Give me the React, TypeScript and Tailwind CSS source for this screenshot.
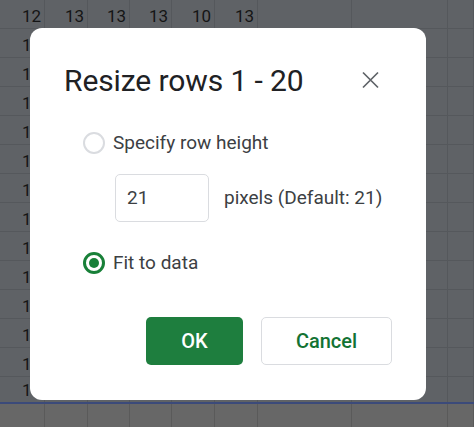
import React from 'react';

const COLS = [45, 43, 42, 42, 43, 43, 94, 96, 26];
const TOP_ROW = ['12', '13', '13', '13', '10', '13', '', '', ''];

function SheetRow({ values, h }: { values: string[]; h: string }) {
  return (
    <div className={`flex ${h} border-b border-[#55585c]`}>
      {COLS.map((w, i) => (
        <div
          key={i}
          style={{ width: w }}
          className="flex shrink-0 items-end justify-end border-r border-[#55585c] pb-[3px] pr-[3px] text-[17px] leading-none text-[#151515]"
        >
          {values[i]}
        </div>
      ))}
    </div>
  );
}

function Radio({ checked }: { checked: boolean }) {
  return checked ? (
    <span className="grid h-[22px] w-[22px] place-items-center rounded-full border-[3px] border-[#188038]">
      <span className="h-[10px] w-[10px] rounded-full bg-[#188038]" />
    </span>
  ) : (
    <span className="h-[22px] w-[22px] rounded-full border-2 border-[#dadce0]" />
  );
}

export default function App() {
  const rows = Array.from({ length: 13 }, (_, i) => (i === 0 ? TOP_ROW : ['13']));

  return (
    <div className="relative h-[427px] w-[474px] overflow-hidden bg-[#5f6266] font-['Roboto',sans-serif]">
      {/* sheet behind the dialog */}
      <div className="flex flex-col">
        {rows.map((v, i) => (
          <SheetRow key={i} values={v} h="h-[29px]" />
        ))}
        <SheetRow values={['13']} h="h-[25px] border-b-0" />
        <div className="h-[2px] bg-[#3b4a7a]" />
        <div className="flex h-[30px] bg-[#676767]">
          {COLS.map((w, i) => (
            <div key={i} style={{ width: w }} className="shrink-0 border-r border-[#5a5a5a]" />
          ))}
        </div>
      </div>

      {/* dialog */}
      <div className="absolute left-[30px] top-[28px] flex h-[372px] w-[396px] flex-col rounded-[12px] bg-white px-[34px]">
        <div className="flex items-center pt-[33px]">
          <h1 className="text-[30px] leading-[40px] tracking-[-0.1px] text-[#202124]">Resize rows 1 - 20</h1>
          <svg viewBox="0 0 17 17" className="ml-auto mr-[13px] -translate-y-[1.5px] h-[17px] w-[17px] text-[#5f6368]" fill="none" stroke="currentColor" strokeWidth="1.7">
            <path d="M1 1l15 15M16 1L1 16" />
          </svg>
        </div>

        <div className="mt-[28px] flex h-[28px] items-center gap-[8px] pl-[19px] text-[19px] text-[#3c4043]">
          <Radio checked={false} />
          <span>Specify row height</span>
        </div>

        <div className="mt-[17px] flex items-center gap-[15px] pl-[51px] text-[19px] text-[#3c4043]">
          <div className="flex h-[48px] w-[94px] items-center rounded-[5px] border border-[#dadce0] pl-[11px]">21</div>
          <span>pixels (Default: 21)</span>
        </div>

        <div className="mt-[27px] flex h-[28px] items-center gap-[8px] pl-[19px] text-[19px] text-[#3c4043]">
          <Radio checked />
          <span>Fit to data</span>
        </div>

        <div className="mt-[40px] flex justify-end gap-[18px]">
          <button className="h-[48px] w-[97px] rounded-[5px] bg-[#1e7e3e] text-[20px] font-medium text-white">OK</button>
          <button className="h-[48px] w-[131px] rounded-[5px] border border-[#dadce0] text-[20px] font-medium text-[#137333]">Cancel</button>
        </div>
      </div>
    </div>
  );
}
